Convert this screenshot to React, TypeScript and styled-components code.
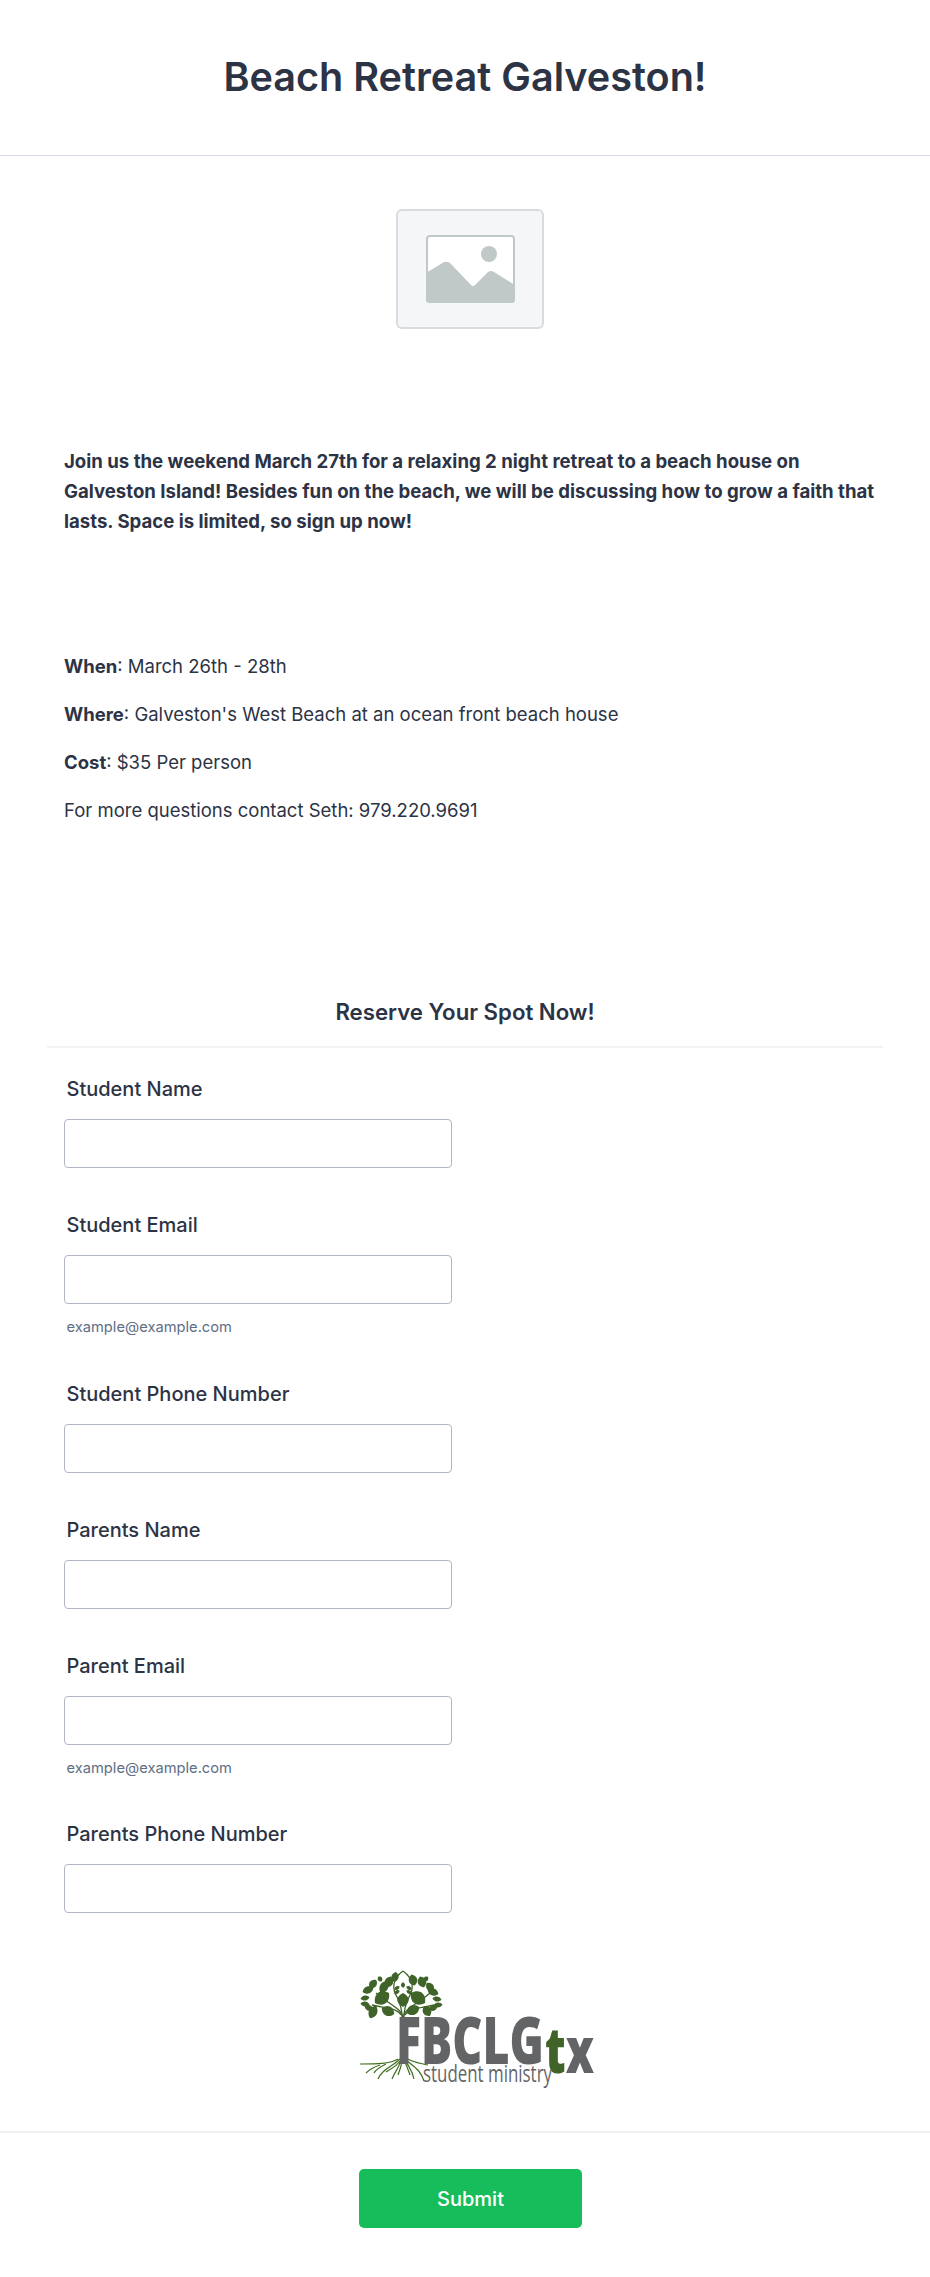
import React, { FC } from "react";
import styled, { createGlobalStyle } from "styled-components";

type Field = {
  label: string;
  hint?: string;
};

const fields: Field[] = [
  { label: "Student Name" },
  { label: "Student Email", hint: "example@example.com" },
  { label: "Student Phone Number" },
  { label: "Parents Name" },
  { label: "Parent Email", hint: "example@example.com" },
  { label: "Parents Phone Number" },
];

// x, y, half length, half width, angle - in logo coordinates
const leaves: number[][] = [
  [49, 31, 5, 3, 20], [55, 26, 4.5, 2.5, 10], [73, 29, 5, 3, -15], [82, 31, 5, 3, -20],
  [40, 28, 2.5, 1.6, -40], [86, 28, 2.5, 1.6, 40], [44, 36, 6, 3, 30], [33, 33, 4.5, 2.6, 40],
  [28, 39, 5, 2.5, 70], [90, 36, 4.5, 2.6, -40], [93, 41, 5, 2.5, -70],
  [42, 47, 7.5, 4.5, 55], [78, 47, 7.5, 4.5, -55], [25, 47, 4, 1.8, 80], [97, 48, 4, 1.8, -80],
  [25, 53, 4, 1.8, 95], [98, 54, 4, 1.8, -95], [29, 57, 4, 2, 110], [93, 57, 4, 2, -110],
  [33, 61, 6, 3, 25], [48, 60, 6, 3.5, -65], [73, 59, 6, 3.5, 65], [87, 60, 5, 3, -30],
  [63, 49, 6, 4, 0], [63, 34, 2.4, 1.4, 0], [57, 37, 2.6, 1.3, 60], [69, 37, 2.6, 1.3, -60],
  [57, 41, 2.6, 1.3, 60], [69, 41, 2.6, 1.3, -60],
];

const branches = [
  "M63 66 C62 58 50 54 36 42",
  "M63 66 C64 58 76 54 90 42",
  "M61 64 C58 58 50 58 32 54",
  "M65 64 C68 58 76 58 94 54",
  "M63 20 C52 28 52 38 57 46 C60 52 62 58 62 66",
  "M63 20 C74 28 74 38 69 46 C66 52 64 58 64 66",
];

const roots = [
  "M58 108 C50 113 36 113 20 113",
  "M60 108 C52 116 42 118 38 128",
  "M60 110 C56 116 50 118 46 121",
  "M60 110 C60 116 56 118 52 128",
  "M62 108 C62 114 60 118 58 124",
  "M64 108 C66 114 68 118 70 124",
  "M65 108 C68 116 72 118 74 128",
  "M65 108 C74 116 80 118 84 130",
  "M66 107 C74 112 80 112 88 114",
  "M40 114 C34 116 30 118 26 122",
  "M46 113 C40 116 36 118 34 122",
];

const leafPath = (l: number, w: number) => {
  const h = l * 1.15;
  const s = w * 1.9;
  return `M0 ${-h} C${s} ${-h / 2} ${s} ${h / 2} 0 ${h} C${-s} ${h / 2} ${-s} ${-h / 2} 0 ${-h} Z`;
};

const App: FC = () => (
  <Page>
    <GlobalStyle />
    <Header>
      <Title>Beach Retreat Galveston!</Title>
    </Header>

    <ImageRow>
      <Placeholder>
        <svg width="89" height="68" viewBox="0 0 89 68">
          <rect x="1" y="1" width="87" height="66" rx="3" fill="#fff" stroke="#c1c8c8" strokeWidth="2" />
          <circle cx="63" cy="19" r="8" fill="#c1c8c8" />
          <path
            d="M0 38 L18 27 Q21 26 24 28 L45 50 Q47 52 49 50 L62 37 Q65 35 68 37 L89 50 V64 Q89 68 85 68 H4 Q0 68 0 64 Z"
            fill="#c1c8c8"
          />
        </svg>
      </Placeholder>
    </ImageRow>

    <Intro>
      Join us the weekend March 27th for a relaxing 2 night retreat to a beach house on Galveston Island! Besides fun
      on the beach, we will be discussing how to grow a faith that lasts. Space is limited, so sign up now!
    </Intro>

    <Details>
      <Detail>
        <strong>When</strong>: March 26th - 28th
      </Detail>
      <Detail>
        <strong>Where</strong>: Galveston's West Beach at an ocean front beach house
      </Detail>
      <Detail>
        <strong>Cost</strong>: $35 Per person
      </Detail>
      <Detail>For more questions contact Seth: 979.220.9691</Detail>
    </Details>

    <FormHeading>Reserve Your Spot Now!</FormHeading>

    <FieldList>
      {fields.map((field) => (
        <FieldRow key={field.label}>
          <Label>{field.label}</Label>
          <Input type="text" />
          {field.hint && <Hint>{field.hint}</Hint>}
        </FieldRow>
      ))}
    </FieldList>

    <LogoRow>
      <svg width="280" height="150" viewBox="0 0 280 150">
        <g stroke="#3f6f20" strokeWidth="1.2" fill="none">
          {roots.map((d) => (
            <path key={d} d={d} />
          ))}
        </g>
        <g stroke="#3f6328" strokeWidth="1.3" fill="none">
          {branches.map((d) => (
            <path key={d} d={d} />
          ))}
        </g>
        {leaves.map(([x, y, l, w, a]) => (
          <path key={`${x}-${y}`} d={leafPath(l, w)} transform={`translate(${x} ${y}) rotate(${a})`} fill="#3f6328" />
        ))}
        <LogoName x="56" y="113" textLength="148" lengthAdjust="spacingAndGlyphs">
          FBCLG
        </LogoName>
        <LogoTail x="205" y="122" textLength="49" lengthAdjust="spacingAndGlyphs">
          <tspan fill="#3f6328">t</tspan>x
        </LogoTail>
        <LogoSub x="83" y="131" textLength="129" lengthAdjust="spacingAndGlyphs">
          student ministry
        </LogoSub>
      </svg>
    </LogoRow>

    <Footer>
      <SubmitButton type="button">Submit</SubmitButton>
    </Footer>
  </Page>
);

const GlobalStyle = createGlobalStyle`
  html, body {
    margin: 0;
    padding: 0;
    background: #fff;
  }
`;

const Page = styled.div`
  width: 930px;
  height: 2277px;
  overflow: hidden;
  font-family: Inter, "Liberation Sans", sans-serif;
  color: #2c3345;
`;

const Header = styled.header`
  box-sizing: border-box;
  height: 156px;
  display: flex;
  align-items: center;
  justify-content: center;
  border-bottom: 1px solid #d8dae9;
`;

const Title = styled.h1`
  margin: 0 0 2px;
  font-size: 39.6px;
  line-height: 48px;
  font-weight: 600;
`;

const ImageRow = styled.div`
  display: flex;
  justify-content: center;
  padding: 53px 0 0 10px;
`;

const Placeholder = styled.div`
  box-sizing: border-box;
  width: 148px;
  height: 120px;
  display: flex;
  align-items: center;
  justify-content: center;
  background: #f5f6f8;
  border: 2px solid #d8dbe0;
  border-radius: 6px;
`;

const Intro = styled.p`
  margin: 117px 0 0;
  padding: 0 50px 0 64px;
  font-size: 18.6px;
  line-height: 30px;
  font-weight: 700;
`;

const Details = styled.div`
  margin-top: 116px;
  padding: 0 64px;
  display: flex;
  flex-direction: column;
  gap: 20px;
`;

const Detail = styled.p`
  margin: 0;
  font-size: 18.5px;
  line-height: 28px;
`;

const FormHeading = styled.h2`
  margin: 174px 47px 0;
  padding-bottom: 20px;
  text-align: center;
  font-size: 22.2px;
  line-height: 28px;
  font-weight: 600;
  border-bottom: 2px solid #f3f3f6;
`;

const FieldList = styled.div`
  padding: 27px 64px 0;
`;

const FieldRow = styled.div`
  display: flex;
  flex-direction: column;
  align-items: flex-start;
  padding-bottom: 43px;
`;

const Label = styled.label`
  padding-left: 2.5px;
  margin-bottom: 16px;
  font-size: 20px;
  line-height: 28px;
  font-weight: 500;
`;

const Input = styled.input`
  box-sizing: border-box;
  width: 388px;
  height: 49px;
  padding: 0 12px;
  background: #fff;
  border: 1px solid #b2b7c6;
  border-radius: 4px;
`;

const Hint = styled.span`
  margin: 14px 0 0.5px;
  padding-left: 2.5px;
  font-size: 14.7px;
  line-height: 18px;
  color: #606e85;
`;

const LogoRow = styled.div`
  height: 180px;
  margin-top: -5px;
  padding-left: 340px;
`;

const LogoName = styled.text`
  font-family: "Open Sans", sans-serif;
  font-size: 66px;
  font-weight: 800;
  fill: #636466;
`;

const LogoTail = styled.text`
  font-family: "Open Sans", sans-serif;
  font-size: 64px;
  font-weight: 800;
  fill: #636466;
`;

const LogoSub = styled.text`
  font-family: "Open Sans", sans-serif;
  font-size: 23px;
  fill: #636466;
`;

const Footer = styled.footer`
  display: flex;
  justify-content: center;
  padding: 36px 0 0 11px;
  border-top: 2px solid #f0f0f5;
`;

const SubmitButton = styled.button`
  width: 223px;
  height: 59px;
  font-family: inherit;
  font-size: 20px;
  font-weight: 500;
  color: #fff;
  background: #18bd5b;
  border: none;
  border-radius: 5px;
`;

export default App;
